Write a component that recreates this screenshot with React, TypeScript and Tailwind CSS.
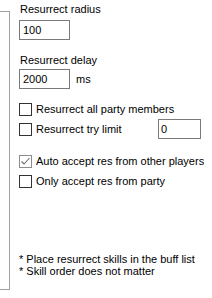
import React from "react";

function Box({ checked = false }: { checked?: boolean }) {
  return (
    <div
      className={
        "w-[13px] h-[13px] shrink-0 border bg-white flex items-center justify-center " +
        (checked ? "border-[#8c8c8c]" : "border-[#333333]")
      }
    >
      {checked && (
        <svg width="11" height="11" viewBox="0 0 11 11">
          <path d="M1.5 5.5 L4 8 L9.5 2" fill="none" stroke="#6e6e6e" strokeWidth="1.1" />
        </svg>
      )}
    </div>
  );
}

function CheckRow({ label, checked = false, h = "h-[20px]" }: { label: string; checked?: boolean; h?: string }) {
  return (
    <div className={"flex items-center gap-[4px] " + h}>
      <Box checked={checked} />
      <span className="leading-[13px] whitespace-nowrap">{label}</span>
    </div>
  );
}

export default function App() {
  return (
    <div
      className="w-[212px] h-[298px] bg-white overflow-hidden flex text-black text-[11px]"
      style={{ fontFamily: '"Liberation Sans", Arial, sans-serif' }}
    >
      <div className="w-[10px] h-[279px] mt-[11px] shrink-0 border-t border-r border-b border-[#a0a0a0]" />
      <div className="ml-[9px] pt-[3px] flex flex-col flex-1">
        <div className="h-[13px] leading-[13px] ml-[1px]">Resurrect radius</div>
        <div className="mt-[4px] w-[51px] h-[20px] border border-[#7a7a7a] pl-[3px] flex items-center leading-[13px]">
          100
        </div>
        <div className="mt-[14px] h-[13px] leading-[13px] ml-[1px]">Resurrect delay</div>
        <div className="mt-[2px] flex items-center h-[20px]">
          <div className="w-[51px] h-[20px] border border-[#7a7a7a] pl-[3px] flex items-center leading-[13px]">
            2000
          </div>
          <span className="ml-[6px] leading-[13px]">ms</span>
        </div>
        <div className="mt-[11px]">
          <CheckRow label="Resurrect all party members" h="h-[19px]" />
        </div>
        <div className="flex items-center h-[20px]">
          <Box />
          <span className="ml-[4px] w-[122px] leading-[13px] whitespace-nowrap">Resurrect try limit</span>
          <div className="w-[43px] h-[20px] border border-[#7a7a7a] pl-[2px] flex items-center leading-[13px]">
            0
          </div>
        </div>
        <div className="mt-[12px]">
          <CheckRow label="Auto accept res from other players" checked />
          <CheckRow label="Only accept res from party" />
        </div>
        <div className="mt-[62px] leading-[12px]">
          <div>* Place resurrect skills in the buff list</div>
          <div>* Skill order does not matter</div>
        </div>
      </div>
    </div>
  );
}
